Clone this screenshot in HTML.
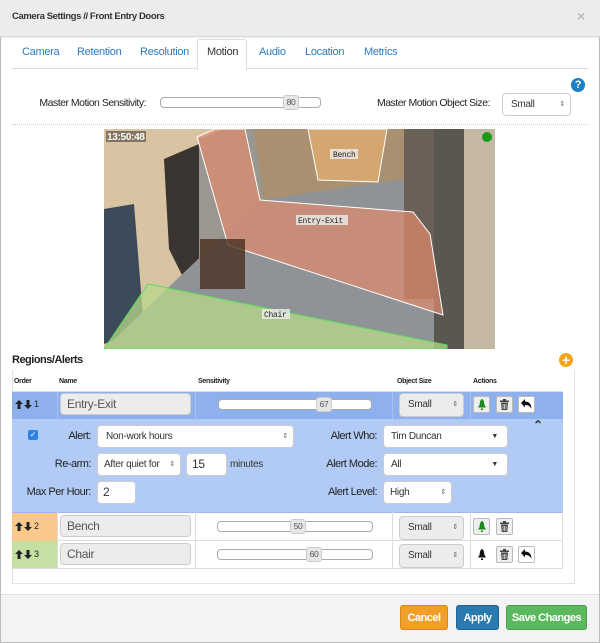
<!DOCTYPE html>
<html><head><meta charset="utf-8"><style>
*{box-sizing:border-box;margin:0;padding:0}
body{width:600px;height:643px;overflow:hidden;background:#fff;font-family:"Liberation Sans",sans-serif;font-size:11px;color:#333;position:relative;letter-spacing:-0.3px}
.abs{position:absolute}
.hdr{left:0;top:0;width:600px;height:37px;background:#ececec;border-bottom:1px solid #d8d8d8;box-shadow:0 1px 2px rgba(0,0,0,0.08)}
.tab{top:46px;color:#2a7cc1;font-size:11px}
.lbl{font-size:10.5px;color:#222;text-align:right;letter-spacing:-0.5px}
.slider{height:11px;border:1px solid #aaa;border-radius:4px;background:#fff}
.thumb{width:16px;height:15px;background:#e6e6e6;border:1px solid #ccc;border-radius:3px;font-size:8.5px;color:#555;text-align:center;line-height:13px}
.sel{border:1px solid #ccc;border-radius:4px;background:#fff;font-size:10px;padding-left:8px}
.inp{border:1px solid #ccc;border-radius:4px;background:#ececec;font-size:12px;color:#555;padding-left:6px}
.ico{width:17px;height:17px;background:#eee;border:1px solid #bbb;border-radius:2px}
.ico svg{display:block;margin:2px auto 0}
.btn{top:605px;height:25px;border-radius:3px;color:#fff;font-size:11px;font-weight:bold;text-align:center;line-height:25px;letter-spacing:-0.5px}
.ud{font-size:9px;color:#222;display:flex;align-items:center;gap:1px}
.arr{width:15px;height:15px;display:inline-block}
</style></head><body>
<div class="abs" style="left:0;top:0;width:600px;height:643px;border:1px solid #bbb"></div>
<div class="abs hdr"></div>
<div class="abs" style="left:12px;top:11px;font-size:9.5px;font-weight:bold;color:#333;letter-spacing:-0.4px">Camera Settings // Front Entry Doors</div>
<div class="abs" style="left:577px;top:8px;font-size:14px;color:#bbb;font-weight:bold">×</div>
<div class="abs" style="left:12px;top:68px;width:576px;height:1px;background:#ddd"></div>
<div class="abs" style="left:197px;top:39px;width:50px;height:31px;background:#fff;border:1px solid #ddd;border-bottom:none;border-radius:3px 3px 0 0"></div>
<div class="abs tab" style="left:22px">Camera</div>
<div class="abs tab" style="left:77px">Retention</div>
<div class="abs tab" style="left:140px">Resolution</div>
<div class="abs tab" style="left:207px;color:#333">Motion</div>
<div class="abs tab" style="left:259px">Audio</div>
<div class="abs tab" style="left:305px">Location</div>
<div class="abs tab" style="left:364px">Metrics</div>
<div class="abs" style="left:571px;top:78px;width:14px;height:14px;border-radius:50%;background:#1a7fc4;color:#fff;font-weight:bold;font-size:11px;text-align:center;line-height:14px">?</div>
<div class="abs lbl" style="left:10px;width:136px;top:97px">Master Motion Sensitivity:</div>
<div class="abs slider" style="left:160px;top:97px;width:161px"></div>
<div class="abs thumb" style="left:283px;top:95px">80</div>
<div class="abs lbl" style="left:340px;width:150px;top:97px">Master Motion Object Size:</div>
<div class="abs sel" style="left:502px;top:93px;width:69px;height:23px;line-height:21px">Small<span style="position:absolute;right:5px;font-size:7px;color:#666">⇕</span></div>
<div class="abs" style="left:12px;top:124px;width:576px;border-top:1px dotted #ccc"></div>
<svg class="abs" style="left:104px;top:129px" width="391" height="220" viewBox="0 0 391 220">
<rect width="391" height="220" fill="#9a9690"/>
<polygon points="0,0 120,0 95,10 95,170 40,200 0,220" fill="#d8c3a3"/>
<polygon points="0,80 30,75 40,200 0,215" fill="#3d4a5a"/>
<polygon points="60,30 95,15 95,140 80,150 65,120" fill="#3a3530"/>
<polygon points="150,0 300,0 300,50 160,75" fill="#a89070"/>
<polygon points="156,71 300,50 330,60 391,80 391,220 0,220" fill="#8f9296"/>
<rect x="300" y="0" width="35" height="170" fill="#6b6055"/>
<rect x="360" y="0" width="31" height="220" fill="#c4b8a3"/>
<rect x="330" y="0" width="30" height="220" fill="#5a5650"/>
<polygon points="93,8 111,0 141,0 156,71 309,83 326,105 339,186 124,116" fill="#e08c6c" fill-opacity="0.7" stroke="#fff" stroke-width="1"/>
<polygon points="204,0 283,0 274,53 214,51" fill="#e8b070" fill-opacity="0.7" stroke="#fff" stroke-width="1"/>
<polygon points="44,155 343,216 343,220 0,220" fill="#b8d88a" fill-opacity="0.75" stroke="#5ae05a" stroke-width="1"/>
<rect x="96" y="110" width="45" height="50" fill="#4a3020" opacity="0.8"/>
<rect x="2" y="2" width="40" height="11" fill="#000" opacity="0.4"/>
<text x="3" y="11" font-family="Liberation Sans" font-size="10" font-weight="bold" fill="#fff">13:50:48</text>
<circle cx="383" cy="8" r="5" fill="#1a9a1a"/>
<rect x="226" y="20" width="28" height="10" fill="#eee" opacity="0.8"/><text x="229" y="28" font-family="Liberation Mono" font-size="8" fill="#222">Bench</text>
<rect x="192" y="86" width="52" height="10" fill="#eee" opacity="0.8"/><text x="194" y="94" font-family="Liberation Mono" font-size="8" fill="#222">Entry-Exit</text>
<rect x="158" y="180" width="28" height="10" fill="#eee" opacity="0.8"/><text x="160" y="188" font-family="Liberation Mono" font-size="8" fill="#222">Chair</text>
</svg>
<div class="abs" style="left:12px;top:354px;font-size:11px;font-weight:bold;color:#222;letter-spacing:-0.5px">Regions/Alerts</div>
<div class="abs" style="left:559px;top:353px;width:14px;height:14px;border-radius:50%;background:#f5a31a;color:#fff;font-weight:bold;font-size:14px;text-align:center;line-height:14px">+</div>
<div class="abs" style="left:12px;top:370px;width:563px;height:214px;border:1px solid #e2e2e2;border-top:none"></div>
<div class="abs" style="left:12px;top:373px;width:551px;height:19px;border-bottom:1px solid #ddd;font-size:7px;font-weight:bold;color:#222">
<span class="abs" style="left:2px;top:5px">Order</span><span class="abs" style="left:47px;top:5px">Name</span><span class="abs" style="left:186px;top:5px">Sensitivity</span><span class="abs" style="left:385px;top:5px">Object Size</span><span class="abs" style="left:461px;top:5px">Actions</span></div>
<!-- row1 -->
<div class="abs" style="left:12px;top:392px;width:551px;height:27px;background:#8eb0ec"></div>
<div class="abs" style="left:57px;top:392px;width:1px;height:27px;background:#a8c2f0"></div>
<div class="abs" style="left:195px;top:392px;width:1px;height:27px;background:#a8c2f0"></div>
<div class="abs" style="left:392px;top:392px;width:1px;height:27px;background:#a8c2f0"></div>
<div class="abs" style="left:470px;top:392px;width:1px;height:27px;background:#a8c2f0"></div>
<div class="abs ud" style="left:15px;top:399px"><svg width="18" height="9" viewBox="0 0 18 9"><path d="M4 0L8 4H5.5V9H2.5V4H0Z M13 9L9 5H11.5V0H14.5V5H17Z" fill="#222"/></svg>1</div>
<div class="abs inp" style="left:60px;top:393px;width:131px;height:22px;line-height:20px">Entry-Exit</div>
<div class="abs slider" style="left:218px;top:399px;width:154px"></div>
<div class="abs thumb" style="left:316px;top:397px">67</div>
<div class="abs sel" style="left:399px;top:393px;width:65px;height:24px;line-height:22px;background:#ececec">Small<span style="position:absolute;right:5px;font-size:7px;color:#666">⇕</span></div>
<div class="abs ico" style="left:473px;top:396px"><svg width="10" height="11" viewBox="0 0 10 11"><path d="M5 0C3 1 3 3 2.5 6L1 8.5H9L7.5 6C7 3 7 1 5 0ZM4 9.5H6V11H4Z" fill="#1a8a1a"/></svg></div>
<div class="abs ico" style="left:496px;top:396px"><svg width="9" height="11" viewBox="0 0 9 11"><path d="M0 1.5H9V3H0ZM3 0H6V1.5H3ZM1 3.5H8L7.3 11H1.7Z" fill="#444"/><path d="M3 5V10M4.5 5V10M6 5V10" stroke="#eee" stroke-width="0.7"/></svg></div>
<div class="abs ico" style="left:518px;top:396px;background:#fff"><svg width="11" height="11" viewBox="0 0 11 11"><path d="M0 4L4 0V2.5C8 2.5 10.5 5 10.5 10C9.5 7.5 7.5 6 4 6V8.5Z" fill="#111"/></svg></div>
<!-- expanded -->
<div class="abs" style="left:12px;top:419px;width:551px;height:93px;background:#b2cbf4"></div>
<div class="abs" style="left:28px;top:430px;width:10px;height:10px;border-radius:2px;background:#2a82e6;color:#fff;font-size:8px;text-align:center;line-height:10px">✓</div>
<div class="abs" style="left:533px;top:418px;font-size:12px;font-weight:bold">⌃</div>
<div class="abs lbl" style="left:20px;width:71px;top:430px;font-size:11px">Alert:</div>
<div class="abs sel" style="left:97px;top:425px;width:197px;height:23px;line-height:21px">Non-work hours<span style="position:absolute;right:5px;font-size:7px;color:#666">⇕</span></div>
<div class="abs lbl" style="left:20px;width:71px;top:458px;font-size:11px">Re-arm:</div>
<div class="abs sel" style="left:97px;top:453px;width:84px;height:23px;line-height:21px;padding-left:6px">After quiet for<span style="position:absolute;right:5px;font-size:7px;color:#666">⇕</span></div>
<div class="abs sel" style="left:186px;top:453px;width:41px;height:23px;line-height:21px;font-size:12px;padding-left:5px">15</div>
<div class="abs" style="left:230px;top:459px;font-size:10px">minutes</div>
<div class="abs lbl" style="left:10px;width:81px;top:486px;font-size:11px">Max Per Hour:</div>
<div class="abs sel" style="left:97px;top:481px;width:39px;height:23px;line-height:21px;font-size:12px;padding-left:5px">2</div>
<div class="abs lbl" style="left:300px;width:77px;top:430px;font-size:11px">Alert Who:</div>
<div class="abs sel" style="left:383px;top:425px;width:125px;height:23px;line-height:21px;font-size:10px;padding-left:7px">Tim Duncan<span style="position:absolute;right:9px;font-size:7px">▼</span></div>
<div class="abs lbl" style="left:300px;width:77px;top:458px;font-size:11px">Alert Mode:</div>
<div class="abs sel" style="left:383px;top:453px;width:125px;height:23px;line-height:21px;font-size:10px;padding-left:7px">All<span style="position:absolute;right:9px;font-size:7px">▼</span></div>
<div class="abs lbl" style="left:300px;width:77px;top:486px;font-size:11px">Alert Level:</div>
<div class="abs sel" style="left:383px;top:481px;width:69px;height:23px;line-height:21px;padding-left:6px">High<span style="position:absolute;right:5px;font-size:7px;color:#666">⇕</span></div>
<!-- row2 -->
<div class="abs" style="left:12px;top:512px;width:551px;height:29px;border-top:1px solid #9ab8ec;border-bottom:1px solid #ddd"></div>
<div class="abs" style="left:12px;top:513px;width:45px;height:28px;background:#fbc88c"></div>
<!-- row3 -->
<div class="abs" style="left:12px;top:541px;width:551px;height:28px;border-bottom:1px solid #ddd"></div>
<div class="abs" style="left:12px;top:541px;width:45px;height:27px;background:#c5e0a3"></div>
<div class="abs" style="left:57px;top:512px;width:1px;height:56px;background:#ddd"></div>
<div class="abs" style="left:195px;top:512px;width:1px;height:56px;background:#ddd"></div>
<div class="abs" style="left:392px;top:512px;width:1px;height:56px;background:#ddd"></div>
<div class="abs" style="left:470px;top:512px;width:1px;height:56px;background:#ddd"></div>
<div class="abs" style="left:562px;top:512px;width:1px;height:56px;background:#ddd"></div>
<div class="abs ud" style="left:15px;top:521px"><svg width="18" height="9" viewBox="0 0 18 9"><path d="M4 0L8 4H5.5V9H2.5V4H0Z M13 9L9 5H11.5V0H14.5V5H17Z" fill="#222"/></svg>2</div>
<div class="abs inp" style="left:60px;top:515px;width:131px;height:22px;line-height:20px">Bench</div>
<div class="abs slider" style="left:217px;top:521px;width:156px"></div>
<div class="abs thumb" style="left:290px;top:519px">50</div>
<div class="abs sel" style="left:399px;top:516px;width:65px;height:24px;line-height:22px;background:#ececec">Small<span style="position:absolute;right:5px;font-size:7px;color:#666">⇕</span></div>
<div class="abs ico" style="left:473px;top:518px"><svg width="10" height="11" viewBox="0 0 10 11"><path d="M5 0C3 1 3 3 2.5 6L1 8.5H9L7.5 6C7 3 7 1 5 0ZM4 9.5H6V11H4Z" fill="#1a8a1a"/></svg></div>
<div class="abs ico" style="left:496px;top:518px"><svg width="9" height="11" viewBox="0 0 9 11"><path d="M0 1.5H9V3H0ZM3 0H6V1.5H3ZM1 3.5H8L7.3 11H1.7Z" fill="#444"/><path d="M3 5V10M4.5 5V10M6 5V10" stroke="#eee" stroke-width="0.7"/></svg></div>
<div class="abs ud" style="left:15px;top:549px"><svg width="18" height="9" viewBox="0 0 18 9"><path d="M4 0L8 4H5.5V9H2.5V4H0Z M13 9L9 5H11.5V0H14.5V5H17Z" fill="#222"/></svg>3</div>
<div class="abs inp" style="left:60px;top:543px;width:131px;height:22px;line-height:20px">Chair</div>
<div class="abs slider" style="left:217px;top:549px;width:156px"></div>
<div class="abs thumb" style="left:306px;top:547px">60</div>
<div class="abs sel" style="left:399px;top:544px;width:65px;height:24px;line-height:22px;background:#ececec">Small<span style="position:absolute;right:5px;font-size:7px;color:#666">⇕</span></div>
<div class="abs" style="left:473px;top:546px;width:17px;height:17px"><svg style="display:block;margin:3px auto 0" width="10" height="11" viewBox="0 0 10 11"><path d="M5 0C3 1 3 3 2.5 6L1 8.5H9L7.5 6C7 3 7 1 5 0ZM4 9.5H6V11H4Z" fill="#111"/></svg></div>
<div class="abs ico" style="left:496px;top:546px"><svg width="9" height="11" viewBox="0 0 9 11"><path d="M0 1.5H9V3H0ZM3 0H6V1.5H3ZM1 3.5H8L7.3 11H1.7Z" fill="#444"/><path d="M3 5V10M4.5 5V10M6 5V10" stroke="#eee" stroke-width="0.7"/></svg></div>
<div class="abs ico" style="left:518px;top:546px;background:#fff"><svg width="11" height="11" viewBox="0 0 11 11"><path d="M0 4L4 0V2.5C8 2.5 10.5 5 10.5 10C9.5 7.5 7.5 6 4 6V8.5Z" fill="#111"/></svg></div>
<!-- footer -->
<div class="abs" style="left:1px;top:594px;width:598px;height:48px;background:#f3f3f3;border-top:1px solid #e2e2e2"></div>
<div class="abs btn" style="left:400px;width:48px;background:#f0a02a;border:1px solid #d88a10">Cancel</div>
<div class="abs btn" style="left:456px;width:43px;background:#2a7aaf;border:1px solid #1f6595">Apply</div>
<div class="abs btn" style="left:506px;width:81px;background:#5cb85c;border:1px solid #4aa04a">Save Changes</div>
</body></html>
